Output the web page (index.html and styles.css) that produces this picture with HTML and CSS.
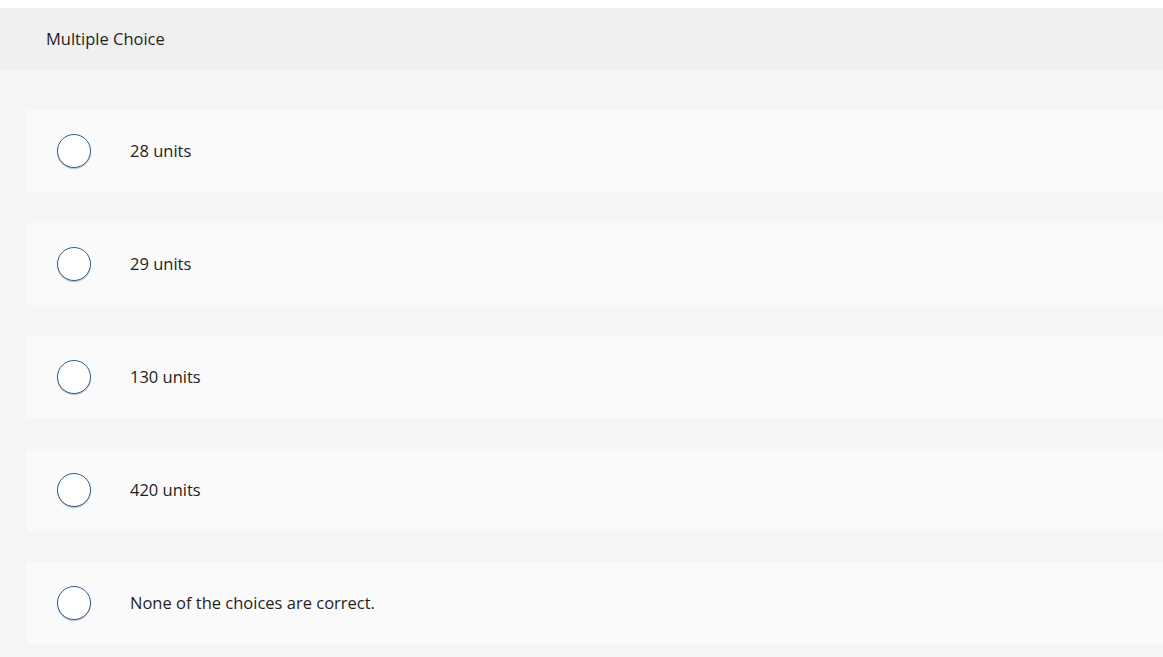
FILE: index.html
```html
<!DOCTYPE html>
<html lang="en">
<head>
    <meta charset="UTF-8">
    <title>Multiple Choice</title>
    <link rel="stylesheet" href="styles.css">
</head>
<body>
    <!-- Question header -->
    <div class="header">Multiple Choice</div>

    <!-- Answer choices -->
    <div class="choices">
        <label class="choice"><span class="radio"></span><span class="text">28 units</span></label>
        <label class="choice"><span class="radio"></span><span class="text">29 units</span></label>
        <label class="choice"><span class="radio"></span><span class="text">130 units</span></label>
        <label class="choice"><span class="radio"></span><span class="text">420 units</span></label>
        <label class="choice"><span class="radio"></span><span class="text">None of the choices are correct.</span></label>
    </div>
</body>
</html>
```

FILE: styles.css
```css
body {
    margin: 0;
    padding-top: 8px;
    background-color: #ffffff;
    font-family: "Open Sans", Arial, sans-serif;
    color: #1f1f1f;
    overflow: hidden;
}
.header {
    background-color: #f0f0f0;
    height: 60px;
    padding-bottom: 2px;
    display: flex;
    align-items: center;
    padding-left: 46px;
    font-size: 16.5px;
}
.choices {
    background-color: #f5f5f5;
    padding: 40px 0 20px 26px;
    display: flex;
    flex-direction: column;
    gap: 31px;
}
.choice {
    background-color: #fafafa;
    border-radius: 4px 0 0 4px;
    height: 82px;
    display: flex;
    align-items: center;
    padding-left: 31px;
    cursor: pointer;
}
.radio {
    width: 32px;
    height: 32px;
    border: 1.5px solid #2f5f8f;
    border-radius: 50%;
    background: #ffffff;
    box-shadow: 0 1px 1px rgba(0, 0, 0, 0.25);
    flex-shrink: 0;
}
.text {
    margin-left: 39px;
    padding-bottom: 2px;
    font-size: 16.5px;
}
```
